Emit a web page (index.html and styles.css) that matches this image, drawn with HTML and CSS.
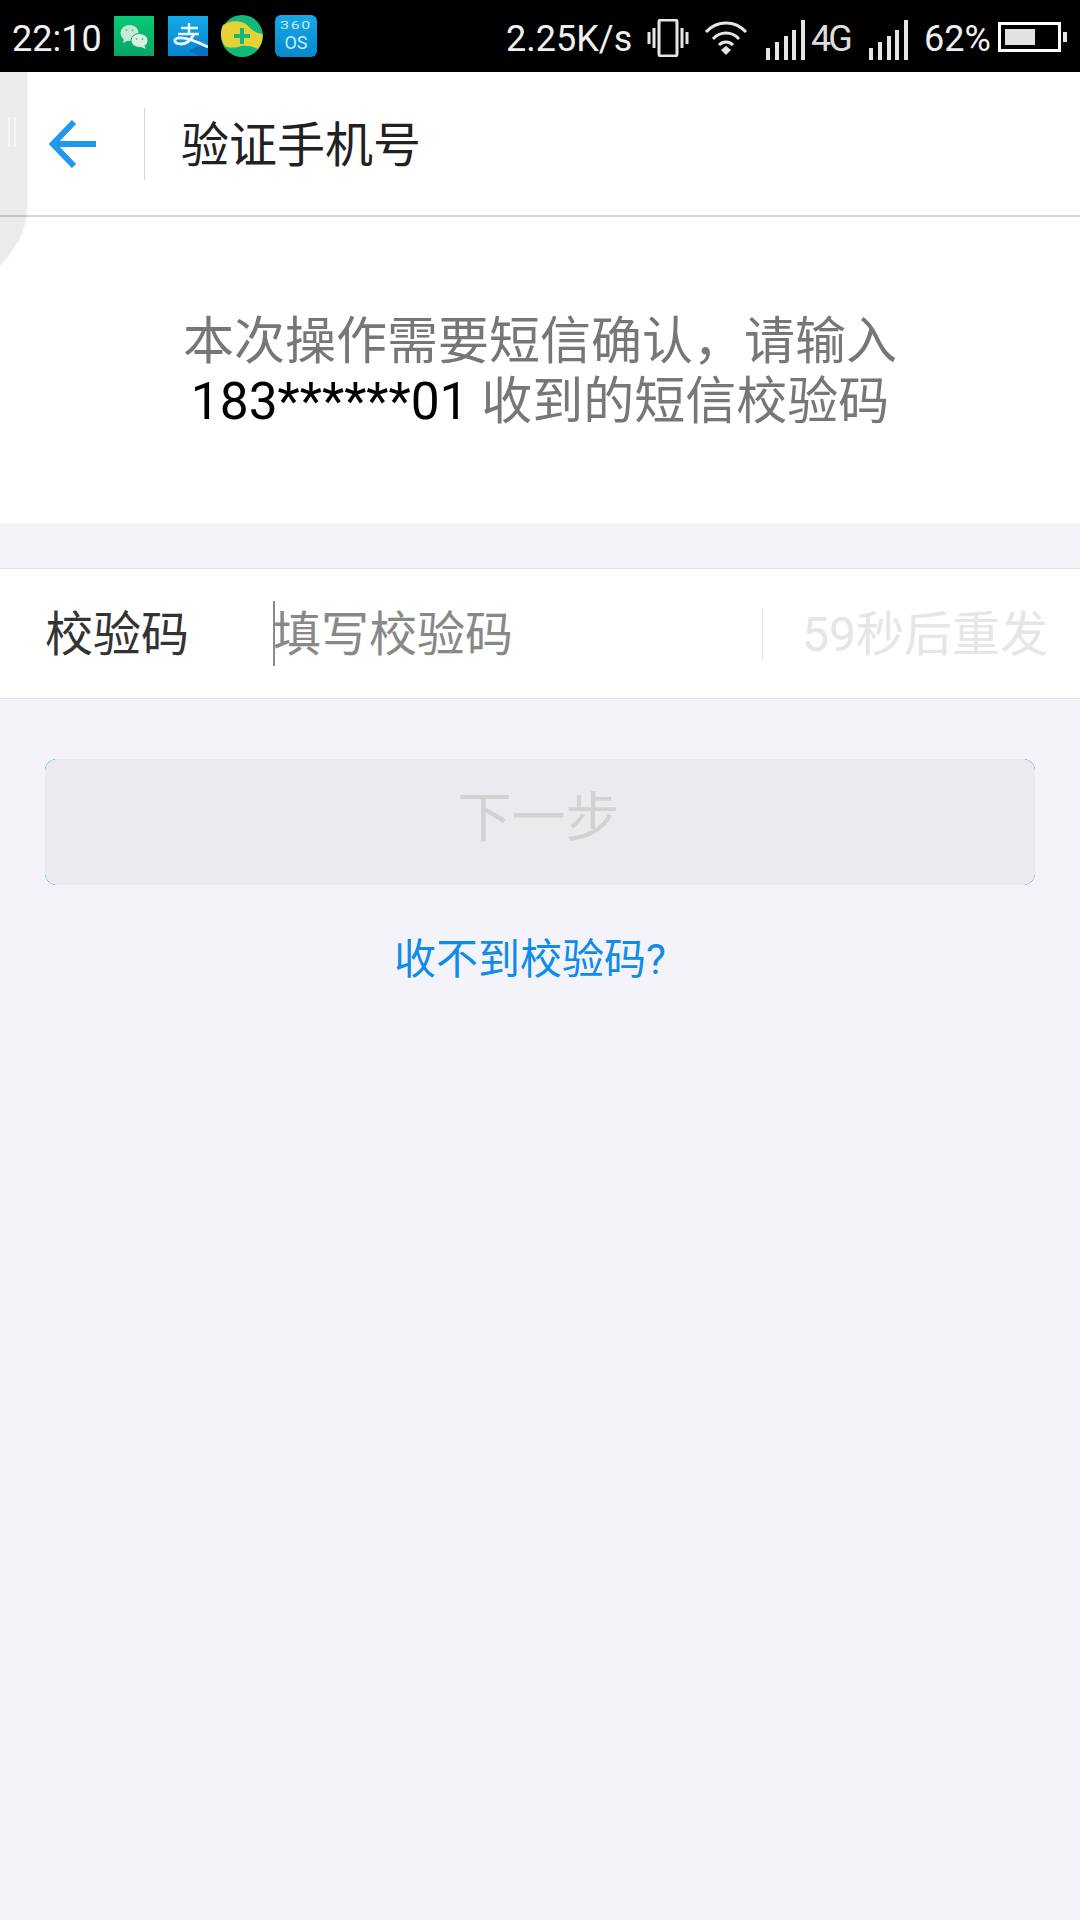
FILE: index.html
```html
<!DOCTYPE html>
<html lang="zh-CN">
<head>
  <meta charset="UTF-8" />
  <meta name="viewport" content="width=device-width, initial-scale=1.0"/>
  <title>验证手机号</title>
  <link rel="stylesheet" href="styles.css">
</head>
<body>
  <div class="statusbar">
    <span class="time">22:10</span>
    <svg class="noti wechat" viewBox="0 0 40 40">
      <defs><linearGradient id="wg" x1="0" y1="0" x2="0" y2="1"><stop offset="0" stop-color="#07cb77"/><stop offset="1" stop-color="#05a566"/></linearGradient></defs>
      <rect width="40" height="40" fill="url(#wg)"/>
      <ellipse cx="15.500" cy="17" rx="9" ry="8" fill="#c6ead6"/>
      <path d="M10 22l-1 5 6-3z" fill="#c6ead6"/>
      <ellipse cx="25.500" cy="24.500" rx="8.500" ry="7" fill="#d8efe2" stroke="#07b56f" stroke-width="1"/>
      <path d="M30 29l2 4-5-2z" fill="#d8efe2"/>
      <circle cx="22.500" cy="23" r="1" fill="#5cc596"/><circle cx="28.500" cy="23" r="1" fill="#5cc596"/>
      <circle cx="12.500" cy="14" r="1" fill="#5cc596"/><circle cx="18.500" cy="14" r="1" fill="#5cc596"/>
    </svg>
    <svg class="noti alipay" viewBox="0 0 40 40">
      <defs><linearGradient id="ag" x1="0" y1="0" x2="0" y2="1"><stop offset="0" stop-color="#14a9e8"/><stop offset="1" stop-color="#0783d0"/></linearGradient></defs>
      <rect width="40" height="40" fill="url(#ag)"/>
      <path d="M31 30c-4 1-6 3-10 5l10 5h9v-8z" fill="#0a6fbd"/>
      <path d="M13 12h17M21 7v10M10 18h21" fill="none" stroke="#eef6fb" stroke-width="2.400"/>
      <path d="M26 18c-3 6-8 10-13 10-7 0-8-5-3-6 6-1 16 2 30 9" fill="none" stroke="#eef6fb" stroke-width="2.800"/>
    </svg>
    <svg class="noti plus" viewBox="0 0 42 42">
      <circle cx="21" cy="21" r="21" fill="#12b97a"/>
      <path d="M2 10C8 6 16 5 23 8c5 2 8 10 18.500 11 .5 6-1.500 11-4.500 15-6-3-11-4-17-3-6 2-12 2-16 0C-1 24-1 16 2 10z" fill="#e6d237"/>
      <path d="M21 13v16M13 21h16" stroke="#12b97a" stroke-width="4"/>
    </svg>
    <div class="os-icon"><span class="os-360">360</span><span class="os-os">OS</span></div>

    <span class="speed">2.25K/s</span>
    <svg class="vibrate" width="42" height="38" viewBox="0 0 42 38" fill="none" stroke="#e6e6e6">
      <rect x="12" y="1" width="18" height="36" rx="2" stroke-width="3"/>
      <path d="M7 9v20M2 13v12M35 9v20M40 13v12" stroke-width="3"/>
    </svg>
    <svg class="wifi" width="44" height="36" viewBox="0 0 44 36" fill="none" stroke="#e6e6e6" stroke-width="3">
      <path d="M2 13C13 1 31 1 42 13"/>
      <path d="M9 20c7-8 19-8 26 0"/>
      <path d="M15 26c4-4 10-4 14 0"/>
      <path d="M17 31l5-4 5 4-5 5z" fill="#e6e6e6" stroke="none"/>
    </svg>
    <svg class="signal" width="40" height="40" viewBox="0 0 40 40" fill="#e6e6e6">
      <rect x="0" y="28" width="4" height="12"/><rect x="9" y="22" width="4" height="18"/><rect x="18" y="16" width="4" height="24"/><rect x="26" y="10" width="4" height="30"/><rect x="35" y="0" width="4" height="40"/>
    </svg>
    <span class="net">4G</span>
    <svg class="signal signal-two" width="40" height="40" viewBox="0 0 40 40" fill="#e6e6e6">
      <rect x="0" y="28" width="4" height="12"/><rect x="9" y="22" width="4" height="18"/><rect x="18" y="16" width="4" height="24"/><rect x="26" y="10" width="4" height="30"/><rect x="35" y="0" width="4" height="40"/>
    </svg>
    <span class="percent">62%</span>
    <div class="battery"><div class="battery-fill"></div></div>
    <div class="battery-tip"></div>
  </div>

  <div class="side-handle"><i></i><i></i></div>

  <div class="navbar">
    <svg class="back" width="47" height="48" viewBox="0 0 47 48" fill="none" stroke="#1f98ee" stroke-width="6">
      <path d="M47 24H4"/>
      <path d="M25 2L4 24l21 22"/>
    </svg>
    <div class="nav-divider"></div>
    <div class="nav-title">验证手机号</div>
  </div>

  <div class="hint">
    本次操作需要短信确认，请输入<br>
    <span class="phone">183******01</span> 收到的短信校验码
  </div>

  <div class="code-row">
    <label class="code-label">校验码</label>
    <div class="caret"></div>
    <div class="code-placeholder">填写校验码</div>
    <div class="code-divider"></div>
    <div class="resend">59秒后重发</div>
  </div>

  <div class="next-btn">下一步</div>
  <div class="help-link">收不到校验码?</div>
</body>
</html>
```

FILE: styles.css
```css
html, body {
  margin: 0;
  padding: 0;
}
body {
  width: 1080px;
  height: 1920px;
  overflow: hidden;
  position: relative;
  background: #f3f3f9;
  font-family: Roboto, "Noto Sans CJK SC", sans-serif;
}

/* status bar */
.statusbar {
  height: 72px;
  background: #000;
  color: #f0f0f0;
  display: flex;
  align-items: center;
  padding-left: 12px;
  box-sizing: border-box;
}
.time, .speed, .percent, .net {
  font-size: 36px;
  margin-top: 6px;
}
.time {
  width: 102px;
}
.noti {
  width: 40px;
  height: 40px;
  flex: none;
  margin-right: 14px;
}
.plus {
  width: 42px;
  height: 42px;
  margin-left: -1px;
  margin-right: 12px;
}
.os-icon {
  width: 42px;
  height: 42px;
  border-radius: 6px;
  background: linear-gradient(#15a9e6, #0788cf);
  color: #cfeaf8;
  display: flex;
  flex-direction: column;
  align-items: center;
  justify-content: center;
  line-height: 1;
}
.os-360 {
  font-size: 10px;
  letter-spacing: 1px;
  transform: scaleX(1.6);
}
.os-os {
  font-size: 18px;
  margin-top: 3px;
}
.speed {
  margin-left: 189px;
  width: 141px;
}
.vibrate {
  margin-top: 3px;
}
.wifi {
  margin-top: 2px;
  margin-left: 15px;
}
.signal {
  margin-top: 8px;
  margin-left: 18px;
}
.net {
  color: #ddd;
  width: 40px;
  margin-left: 5px;
  letter-spacing: -3px;
}
.signal-two {
  margin-left: 18px;
}
.percent {
  margin-left: 15px;
  width: 74px;
}
.battery {
  width: 63px;
  height: 30px;
  margin-top: 2px;
  border: 3px solid #fff;
  box-sizing: border-box;
  padding: 4px;
}
.battery-fill {
  width: 62%;
  height: 100%;
  background: #e2e2e2;
}
.battery-tip {
  width: 4px;
  height: 10px;
  background: #e6e6e6;
  margin-top: 2px;
  margin-left: 2px;
}

/* floating handle on the left edge, see-through so the nav line shows */
.side-handle {
  position: absolute;
  left: -93px;
  top: 72px;
  width: 120px;
  height: 228px;
  background: rgba(0, 0, 0, 0.08);
  border-bottom-right-radius: 120px 95px;
  box-shadow: 1px 0 3px rgba(0, 0, 0, 0.04);
  display: flex;
  gap: 4px;
  padding: 45px 0 0 101px;
  box-sizing: border-box;
}
.side-handle i {
  width: 2px;
  height: 30px;
  background: #f6f6f6;
}

/* title bar */
.navbar {
  height: 145px;
  background: #fff;
  border-bottom: 2px solid #d6d6d6;
  box-sizing: border-box;
  display: flex;
  align-items: center;
  padding: 1px 0 0 49px;
}
.back {
  flex: none;
}
.nav-divider {
  width: 1px;
  height: 72px;
  background: #d8d8d8;
  margin-left: 48px;
}
.nav-title {
  font-size: 48px;
  color: #212121;
  margin-left: 36px;
  margin-bottom: 6px;
}

/* hint */
.hint {
  background: #fff;
  height: 306px;
  box-sizing: border-box;
  padding-top: 95px;
  text-align: center;
  font-size: 51px;
  line-height: 60px;
  color: #777;
}
.phone {
  color: #000;
  font-size: 51.500px;
}

/* code row */
.code-row {
  margin-top: 45px;
  height: 131px;
  background: #fff;
  border-top: 1px solid #e3e3e6;
  border-bottom: 1px solid #e3e3e6;
  display: flex;
  align-items: center;
  padding: 0 32px 0 45px;
  box-sizing: border-box;
}
.code-label {
  font-size: 48px;
  color: #333;
  width: 228px;
  margin-bottom: 7px;
}
.caret {
  width: 2px;
  height: 65px;
  background: #8a8a8a;
}
.code-placeholder {
  font-size: 48px;
  color: #888;
  flex: 1;
  margin-left: -2px;
  margin-bottom: 7px;
}
.code-divider {
  width: 1px;
  height: 52px;
  background: #e6e6e6;
  margin-right: 39px;
}
.resend {
  font-size: 48px;
  color: #e6e6e6;
  margin-bottom: 7px;
}

/* button */
.next-btn {
  margin: 60px 45px 0 45px;
  height: 126px;
  padding: 0 3px 17px 0;
  box-sizing: border-box;
  border-radius: 12px;
  background: #ebebef;
  color: #d2d2d2;
  font-size: 54px;
  display: flex;
  align-items: center;
  justify-content: center;
  position: relative;
}
.next-btn::before {
  content: "";
  position: absolute;
  inset: 0;
  background:
    radial-gradient(circle at 12px 12px, transparent 11.500px, #6bb9f5 12px, transparent 12.500px) 0 0 / 12px 12px no-repeat,
    radial-gradient(circle at 0 12px, transparent 11.500px, #6bb9f5 12px, transparent 12.500px) 100% 0 / 12px 12px no-repeat,
    radial-gradient(circle at 12px 0, transparent 11.500px, #6bb9f5 12px, transparent 12.500px) 0 100% / 12px 12px no-repeat,
    radial-gradient(circle at 0 0, transparent 11.500px, #6bb9f5 12px, transparent 12.500px) 100% 100% / 12px 12px no-repeat;
}
.help-link {
  margin-top: 50px;
  text-align: center;
  padding-right: 20px;
  font-size: 42px;
  line-height: 50px;
  color: #0f8ce9;
}
```
